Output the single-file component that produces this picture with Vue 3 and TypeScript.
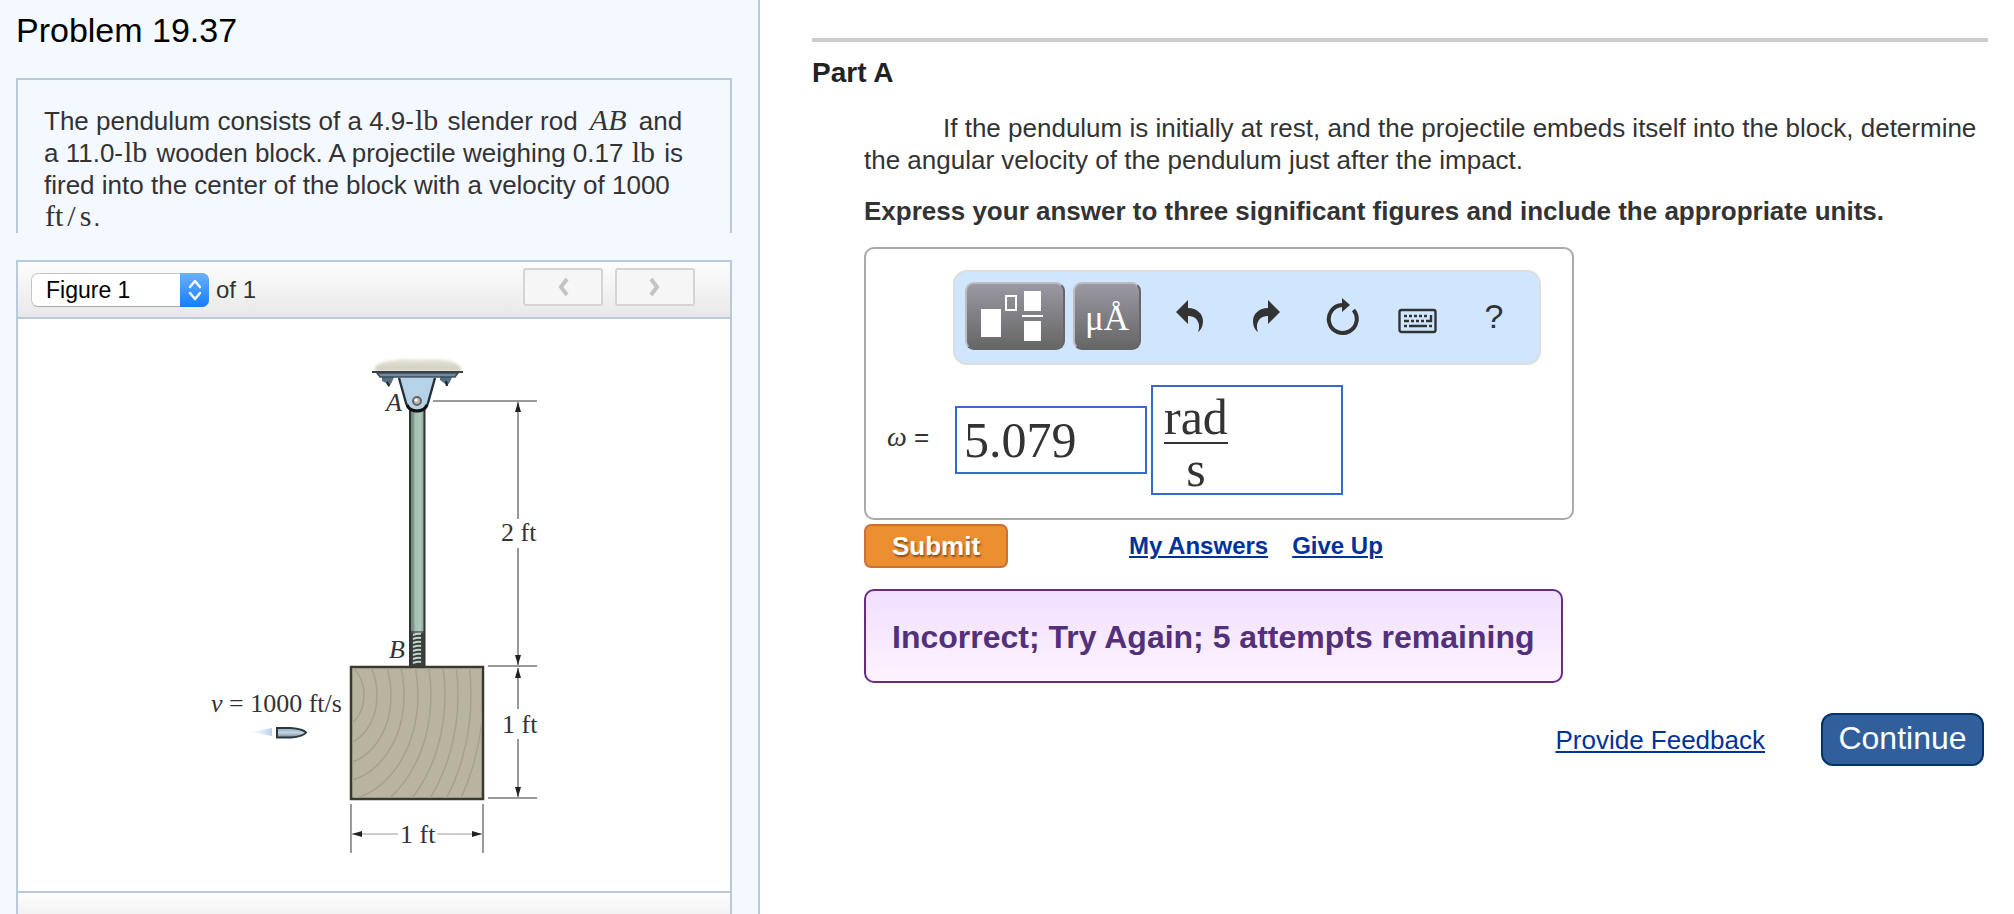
<script setup lang="ts">
import { ref } from 'vue'

const figure = ref('Figure 1')
const answer = ref('5.079')
const units = { top: 'rad', bottom: 's' }

const grain: number[] = [24, 37, 51, 64, 78, 91, 105, 118, 131, 143]
const threads: number[] = [635, 639, 643, 647, 651, 655, 659, 663]
</script>

<template>
  <div class="page">
    <aside class="side">
      <h1 class="title">Problem 19.37</h1>

      <section class="intro">
        <p>
          The pendulum consists of a 4.9-<span class="math">lb</span> slender rod
          <span class="math vars">AB</span> and a 11.0-<span class="math">lb</span> wooden block. A
          projectile weighing 0.17 <span class="math">lb</span> is fired into the center of the block
          with a velocity of 1000 <span class="math">ft<span class="slash">/</span>s</span>.
        </p>
      </section>

      <section class="figure">
        <header class="figure-bar">
          <div class="picker">
            <select id="figure-select" v-model="figure" aria-label="Figure">
              <option>Figure 1</option>
            </select>
            <span class="stepper">
              <svg width="16" height="24" viewBox="0 0 16 24" aria-hidden="true">
                <path d="M3 9l5-6 5 6M3 15l5 6 5-6" fill="none" stroke="#fff" stroke-width="2.4" stroke-linecap="round" stroke-linejoin="round" />
              </svg>
            </span>
          </div>
          <label for="figure-select" class="of">of 1</label>
          <div class="nav">
            <button type="button" disabled aria-label="Previous figure">
              <svg width="16" height="20" viewBox="0 0 16 20"><path d="M12 2L6 10l6 8" fill="none" stroke="#c4c4c4" stroke-width="4" /></svg>
            </button>
            <button type="button" disabled aria-label="Next figure">
              <svg width="16" height="20" viewBox="0 0 16 20"><path d="M4 2l6 8-6 8" fill="none" stroke="#c4c4c4" stroke-width="4" /></svg>
            </button>
          </div>
        </header>

        <div class="canvas">
          <svg class="drawing" width="341" height="572" viewBox="204 319 341 572" role="img" aria-label="Pendulum with rod AB and block">
            <defs>
              <linearGradient id="rod" x1="0" x2="1" y1="0" y2="0">
                <stop offset="0" stop-color="#6d8078" />
                <stop offset="0.25" stop-color="#7f988c" />
                <stop offset="0.35" stop-color="#a3beb0" />
                <stop offset="0.75" stop-color="#afc8ba" />
                <stop offset="1" stop-color="#86a094" />
              </linearGradient>
              <linearGradient id="trail" x1="0" x2="1" y1="0" y2="0">
                <stop offset="0" stop-color="#cfe2f2" stop-opacity="0" />
                <stop offset="1" stop-color="#b4d0e8" />
              </linearGradient>
              <linearGradient id="bullet" x1="0" x2="0" y1="0" y2="1">
                <stop offset="0" stop-color="#8fa8ba" />
                <stop offset="0.5" stop-color="#c3d6e3" />
                <stop offset="1" stop-color="#6d8496" />
              </linearGradient>
              <linearGradient id="ground" x1="0" x2="0" y1="0" y2="1">
                <stop offset="0" stop-color="#e6e3d9" />
                <stop offset="1" stop-color="#cfccbb" />
              </linearGradient>
              <filter id="soft" x="-10%" y="-30%" width="120%" height="160%">
                <feGaussianBlur stdDeviation="1.5" />
              </filter>
              <clipPath id="block"><rect x="352" y="668" width="130" height="130" /></clipPath>
              <marker id="tip" viewBox="0 0 10 6" refX="10" refY="3" markerWidth="10" markerHeight="6" orient="auto-start-reverse" markerUnits="userSpaceOnUse">
                <path d="M0 0L10 3L0 6z" fill="#222" />
              </marker>
            </defs>

            <!-- support -->
            <path d="M374 371C376 360 390 362 400 359C420 361 440 358 450 361C458 363 461 367 462 371z" fill="url(#ground)" filter="url(#soft)" />
            <path d="M382 377h12l-2 5-3 5-3-4-4-2zM440 377h12l-2 5-3 4-3-3-4-3z" fill="#557084" />
            <path d="M387 382l2 4M446 381l1 5" stroke="#222" stroke-width="2" />
            <path d="M377 373h81l-3 4h-75z" fill="#6d8ca3" stroke="#3c4c59" stroke-width="1.5" />
            <path d="M372 372h91" stroke="#3b4247" stroke-width="2" />

            <!-- rod -->
            <rect x="410" y="408" width="14" height="258" fill="url(#rod)" />
            <path d="M410 408v258M424.500 408v258" stroke="#2e3532" stroke-width="2" />
            <path d="M410 632h14" stroke="#222" />
            <rect x="411" y="633" width="13" height="33" fill="#3a403d" />
            <path v-for="y in threads" :key="y" :d="`M413 ${y}q5 -2 8 -1`" stroke="#c6d4cc" stroke-width="2" fill="none" />

            <!-- bracket -->
            <path d="M399 378L406 403Q408 412 417 412Q426 412 428 403L435 378z" fill="#b5d2e9" />
            <path d="M435 378L428 403Q426 411 417 411Q408 411 406 403L399 378" fill="none" stroke="#25323c" stroke-width="2.4" />
            <path d="M427 405Q424 411 417 411Q410 411 407 405" fill="none" stroke="#111" stroke-width="3" />
            <circle cx="417" cy="401" r="4" fill="#b9b9b9" stroke="#666" stroke-width="2" />
            <circle cx="416" cy="400" r="1.5" fill="#fff" />

            <!-- block -->
            <rect x="351" y="667" width="132" height="132" fill="#b8b4a0" stroke="#3b392f" stroke-width="2.5" />
            <g clip-path="url(#block)" fill="none" stroke="#a5a18d" stroke-width="1.5">
              <ellipse v-for="r in grain" :key="r" cx="340" cy="695" :rx="r" :ry="r * 1.35" />
            </g>

            <!-- bullet -->
            <path d="M250 732l22-4v8z" fill="url(#trail)" />
            <path d="M277 728h14q12 1 15 4.500q-3 4-15 5h-14z" fill="url(#bullet)" stroke="#2c3841" stroke-width="2" />

            <!-- dimensions -->
            <g stroke="#9a9a9a" stroke-width="2" fill="none">
              <path d="M433 401h104M488 666h49M488 798h49M351 804v49M483 804v49" />
              <path d="M518 402v117" marker-start="url(#tip)" />
              <path d="M518 548v117" marker-end="url(#tip)" />
              <path d="M518 668v41" marker-start="url(#tip)" />
              <path d="M518 739v58" marker-end="url(#tip)" />
              <path d="M398 834H352" stroke-width="1" marker-end="url(#tip)" />
              <path d="M437 834h45" stroke-width="1" marker-end="url(#tip)" />
            </g>
            <g class="labels">
              <text x="501" y="541">2 ft</text>
              <text x="502" y="733">1 ft</text>
              <text x="400" y="843">1 ft</text>
              <text x="211" y="712"><tspan class="it">v</tspan> = 1000 ft/s</text>
              <text class="it" x="386" y="411">A</text>
              <text class="it" x="389" y="658">B</text>
            </g>
          </svg>
        </div>
        <footer class="figure-foot"></footer>
      </section>
    </aside>

    <main class="main">
      <hr class="rule" />
      <h2 class="part">Part A</h2>
      <div class="body">
        <p class="question">
          If the pendulum is initially at rest, and the projectile embeds itself into the block,
          determine the angular velocity of the pendulum just after the impact.
        </p>
        <p class="hint">
          Express your answer to three significant figures and include the appropriate units.
        </p>

        <form class="answer" @submit.prevent>
          <div class="tools" role="toolbar">
            <button type="button" class="tool" aria-label="Templates">
              <svg width="68" height="50" viewBox="0 0 68 50">
                <path d="M0 18h20v28H0zM43 0h17v20H43zM43 30h17v20H43zM41 24h21v2H41z" fill="#fff" />
                <rect x="25" y="5" width="10" height="14" fill="none" stroke="#fff" stroke-width="2" />
              </svg>
            </button>
            <button type="button" class="tool symbols" aria-label="Symbols">μÅ</button>
            <div class="icons">
              <button type="button" class="icon" aria-label="Undo">
                <svg width="40" height="40" viewBox="0 0 40 40">
                  <path d="M6 16L18 4v8C27 12 33 18 33 25C33 30 31 34 28 36C30 31 29 27 27 24C25 21 22 20 18 20v8z" fill="#333" />
                </svg>
              </button>
              <button type="button" class="icon" aria-label="Redo">
                <svg width="40" height="40" viewBox="0 0 40 40">
                  <path d="M34 16L22 4v8C13 12 7 18 7 25C7 30 9 34 12 36C10 31 11 27 13 24C15 21 18 20 22 20v8z" fill="#333" />
                </svg>
              </button>
              <button type="button" class="icon" aria-label="Reset">
                <svg width="40" height="40" viewBox="0 0 40 40">
                  <path d="M20 9A14 14 0 1 0 31.500 14" fill="none" stroke="#333" stroke-width="4" />
                  <path d="M20 2l8 7-8 7z" fill="#333" />
                </svg>
              </button>
              <button type="button" class="icon" aria-label="Keyboard">
                <svg width="40" height="40" viewBox="0 0 40 40">
                  <rect x="1.5" y="14" width="36" height="22" rx="2" fill="none" stroke="#333" stroke-width="2.4" />
                  <path d="M6 20h3M11 20h3M16 20h3M21 20h3M26 20h3M6 25h5M13 25h3M18 25h3M23 25h3M28 25h5v-6M6 30h3M11 30h18M31 30h3" fill="none" stroke="#333" stroke-width="2.4" />
                </svg>
              </button>
              <button type="button" class="icon help" aria-label="Help">?</button>
            </div>
          </div>

          <div class="entry">
            <label for="value"><i>ω</i> =</label>
            <input id="value" v-model="answer" type="text" />
            <div class="unit" role="textbox" tabindex="0" aria-label="Units">
              <span class="fraction">
                <span>{{ units.top }}</span>
                <span class="denominator">{{ units.bottom }}</span>
              </span>
            </div>
          </div>
        </form>

        <div class="actions">
          <button type="button" class="submit">Submit</button>
          <a href="#answers">My Answers</a>
          <a href="#give-up">Give Up</a>
        </div>

        <p class="result">Incorrect; Try Again; 5 attempts remaining</p>

        <footer class="finish">
          <a href="#feedback">Provide Feedback</a>
          <button type="button">Continue</button>
        </footer>
      </div>
    </main>
  </div>
</template>

<style>
body {
  margin: 0;
  background: #fff;
}
</style>

<style scoped>
.page {
  display: flex;
  min-height: 100vh;
  font-family: "Liberation Sans", Arial, sans-serif;
  font-size: 26px;
  line-height: 32px;
  color: #333;
}
.page *,
.page {
  box-sizing: border-box;
}
h1,
h2,
p {
  margin: 0;
}
button {
  font-family: inherit;
  padding: 0;
}
.side {
  width: 38%;
  max-width: 760px;
  flex: none;
  display: flex;
  flex-direction: column;
  padding: 10px 26px 0 16px;
  background: #f4f8ff;
  border-right: 2px solid #b9cadc;
}
.title {
  font-size: 34px;
  line-height: 40px;
  font-weight: 400;
  color: #000;
}
.intro {
  margin-top: 28px;
  padding: 25px 36px 0 26px;
  border: 2px solid #b9cadc;
  border-bottom: 0;
}
.math {
  padding: 0 2px 0 1px;
  font-family: "Liberation Serif", "Times New Roman", serif;
  font-size: 30px;
  line-height: 0;
}
.vars {
  font-style: italic;
  padding: 0 5px;
}
.slash {
  padding: 0 4px;
}
.figure {
  flex: 1 0 auto;
  display: flex;
  flex-direction: column;
  margin-top: 27px;
  border: 2px solid #b9cadc;
  border-bottom: 0;
  background: #fff;
}
.figure-bar {
  display: flex;
  align-items: center;
  padding: 0 35px 0 13px;
  height: 57px;
  border-bottom: 2px solid #b9cadc;
  background: linear-gradient(#fdfdfd, #e8e8e8);
}
.picker {
  position: relative;
  width: 178px;
  height: 34px;
}
.picker select {
  width: 100%;
  height: 100%;
  appearance: none;
  padding: 0 0 0 14px;
  border: 1px solid #c6c6c6;
  border-bottom-color: #aaa;
  border-radius: 7px;
  background: #fff;
  color: #000;
  font-family: inherit;
  font-size: 23px;
}
.stepper {
  position: absolute;
  top: 0;
  right: 0;
  width: 29px;
  height: 100%;
  display: flex;
  align-items: center;
  justify-content: center;
  border-radius: 0 7px 7px 0;
  background: linear-gradient(#6bb1fa, #157dfb);
  pointer-events: none;
}
.of {
  margin-left: 7px;
  font-size: 24px;
}
.nav {
  display: flex;
  gap: 12px;
  margin-left: auto;
  padding-bottom: 6px;
}
.nav button {
  display: flex;
  align-items: center;
  justify-content: center;
  width: 80px;
  height: 38px;
  border: 2px solid #d4d4d4;
  border-radius: 3px;
  background: #f6f6f6;
}
.canvas {
  display: flex;
  justify-content: center;
}
.drawing {
  display: block;
}
.labels {
  font-family: "Liberation Serif", "Times New Roman", serif;
  font-size: 26px;
  fill: #333;
}
.it {
  font-style: italic;
}
.figure-foot {
  flex: 1;
  min-height: 23px;
  border-top: 2px solid #b9cadc;
  background: linear-gradient(#fdfdfd, #f3f3f3);
}
.main {
  flex: 1;
  min-width: 0;
  padding: 38px 26px 0 52px;
}
.rule {
  height: 4px;
  margin: 0;
  border: 0;
  background: #ccc;
}
.part {
  margin-top: 15px;
  font-size: 28px;
  line-height: 32px;
  color: #222;
}
.body {
  padding-left: 52px;
}
.question {
  margin-top: 23px;
  text-indent: 79px;
}
.hint {
  margin-top: 19px;
  font-weight: 700;
}
.answer {
  max-width: 710px;
  margin-top: 20px;
  padding: 21px 31px 23px 21px;
  border: 2px solid #aaa;
  border-radius: 10px;
}
.tools {
  display: flex;
  gap: 8px;
  margin-left: 66px;
  padding: 10px;
  height: 95px;
  border: 2px solid #ddd;
  border-radius: 14px;
  background: #d0e6ff;
}
.tool {
  display: flex;
  align-items: center;
  justify-content: center;
  width: 100px;
  height: 68px;
  border: 2px solid;
  border-color: #bbb #666 #666 #bbb;
  border-radius: 9px;
  background: linear-gradient(#9a98a3, #666);
  color: #fff;
}
.symbols {
  width: 68px;
  padding-top: 6px;
  font-family: "Liberation Serif", "Times New Roman", serif;
  font-size: 35px;
}
.icons {
  display: flex;
  gap: 36px;
  margin-left: 21px;
}
.icon {
  display: flex;
  align-items: center;
  justify-content: center;
  width: 40px;
  height: 68px;
  border: 0;
  background: none;
  color: #333;
}
.help {
  font-size: 34px;
}
.entry {
  display: flex;
  align-items: center;
  gap: 4px;
  margin-top: 20px;
}
.entry label {
  width: 64px;
  padding-bottom: 6px;
  font-size: 26px;
}
.entry i {
  font-family: "Liberation Serif", "Times New Roman", serif;
  font-size: 28px;
}
.entry input,
.unit {
  width: 192px;
  height: 68px;
  border: 2px solid #366bcc;
  background: #fff;
  color: #333;
  font-family: "Liberation Serif", "Times New Roman", serif;
  font-size: 50px;
}
.entry input {
  padding: 0 7px;
}
.unit {
  height: 110px;
  padding: 5px 11px;
}
.fraction {
  display: inline-flex;
  flex-direction: column;
  align-items: center;
  line-height: 50px;
}
.denominator {
  width: 100%;
  border-top: 2px solid #333;
  text-align: center;
}
.actions {
  display: flex;
  align-items: center;
  margin-top: 4px;
  font-weight: 700;
  font-size: 24px;
}
a {
  color: #039;
  text-underline-offset: 2px;
  text-decoration-thickness: 2px;
}
.actions a + a {
  margin-left: 24px;
}
.submit {
  width: 144px;
  height: 44px;
  margin-right: 121px;
  border: 2px solid #c87137;
  border-radius: 7px;
  background: #eb8e30;
  color: #fff;
  font-size: 26px;
  font-weight: 700;
  text-shadow: 1px 2px 2px #8a4a1a;
}
.result {
  width: fit-content;
  margin-top: 21px;
  padding: 28px 26px 26px;
  border: 2px solid #662d83;
  border-radius: 10px;
  background: linear-gradient(#f1dfff, #fdf3ff);
  color: #53307a;
  font-size: 32px;
  line-height: 36px;
  font-weight: 700;
}
.finish {
  display: flex;
  justify-content: flex-end;
  align-items: center;
  gap: 56px;
  margin-top: 30px;
  padding-right: 4px;
}
.finish button {
  width: 163px;
  height: 53px;
  padding-bottom: 3px;
  border: 2px solid #036;
  border-radius: 12px;
  background: #315f9c;
  color: #fff;
  font-size: 32px;
}
</style>
